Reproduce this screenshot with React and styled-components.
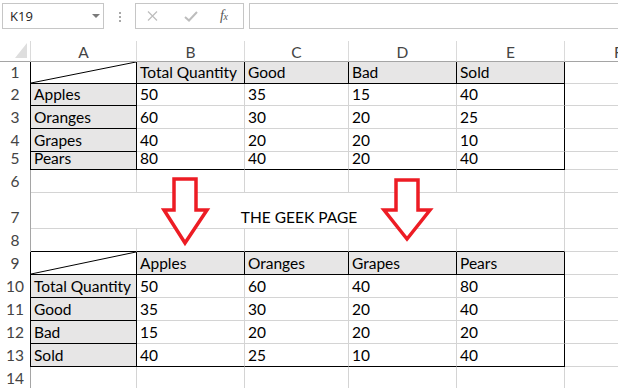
import React from 'react';
import styled, { createGlobalStyle } from 'styled-components';

const GlobalStyle = createGlobalStyle`
  html, body { margin: 0; padding: 0; background: #fff; overflow: hidden; }
  body { font-family: Lato, "Open Sans", sans-serif; }
`;

const Page = styled.div`
  position: relative;
  width: 618px;
  height: 388px;
  overflow: hidden;
  background: #fff;
`;

const Toolbar = styled.div`
  display: flex;
  align-items: flex-start;
  height: 41px;
  box-sizing: border-box;
  padding: 3px 0 0 2px;
`;

const NameBox = styled.div`
  box-sizing: border-box;
  width: 102px;
  height: 26px;
  border: 1px solid #c6c6c6;
  display: flex;
  align-items: center;
  justify-content: space-between;
  padding: 0 3px 0 7px;
  font-family: "Open Sans", sans-serif;
  font-size: 13px;
  color: #222;
`;

const DropArrow = styled.span`
  width: 0;
  height: 0;
  border-left: 4px solid transparent;
  border-right: 4px solid transparent;
  border-top: 4px solid #7a7a7a;
`;

const Dots = styled.div`
  width: 31px;
  display: flex;
  flex-direction: column;
  align-items: center;
  gap: 2px;
  padding-top: 9px;
`;

const Dot = styled.span`
  width: 2px;
  height: 2px;
  background: #a8a8a8;
`;

const FxBox = styled.div`
  box-sizing: border-box;
  width: 109px;
  height: 26px;
  border: 1px solid #c6c6c6;
  display: flex;
  align-items: center;
  padding-left: 11px;
`;

const FxIcon = styled.svg`
  display: block;
  flex: none;
  margin-right: ${p => p.$gap}px;
`;

const FxLabel = styled.span`
  font-family: "Liberation Serif", serif;
  font-style: italic;
  font-size: 14px;
  color: #555;
  letter-spacing: -0.5px;
  & small { font-size: 10px; }
`;

const FormulaInput = styled.div`
  box-sizing: border-box;
  flex: 1;
  height: 26px;
  margin-left: 5px;
  border: 1px solid #c6c6c6;
  border-right: none;
`;

const Sheet = styled.div`
  display: grid;
  grid-template-columns: 31px 106px 108px 104px 108px 108px 108px;
  grid-template-rows: 21px 22px 22px 23px 23px 18px 23px 36px 23px 23px 23px 23px 23px 23px 23px;
  width: max-content;
  font-family: Lato, "Open Sans", sans-serif;
  font-size: 15.5px;
`;

const Corner = styled.div`
  position: relative;
  box-sizing: border-box;
  border-right: 1px solid #dadada;
  border-bottom: 1px solid #a5a5a5;
  &::after {
    content: '';
    position: absolute;
    right: 3px;
    bottom: 3px;
    width: 0;
    height: 0;
    border-left: 12px solid transparent;
    border-bottom: 15px solid #dedede;
  }
`;

const ColHead = styled.div`
  box-sizing: border-box;
  display: flex;
  align-items: center;
  justify-content: center;
  border-right: 1px solid #dadada;
  border-bottom: 1px solid #a5a5a5;
  color: #444;
  line-height: 18px;
  padding-top: 1px;
`;

const RowHead = styled.div`
  box-sizing: border-box;
  display: flex;
  align-items: flex-end;
  justify-content: center;
  border-right: 1px solid ${p => (p.$edge ? '#000' : '#a5a5a5')};
  color: #444;
  line-height: 18px;
  padding-bottom: 3px;
  white-space: nowrap;
`;

const Cell = styled.div`
  box-sizing: border-box;
  position: relative;
  display: flex;
  align-items: flex-end;
  justify-content: ${p => (p.$center ? 'center' : 'flex-start')};
  grid-column: span ${p => p.$span || 1};
  padding: 0 0 2px 3px;
  border-right: 1px solid ${p => (p.$r ? '#000' : '#d4d4d4')};
  border-bottom: 1px solid ${p => (p.$b ? '#000' : '#d4d4d4')};
  background: ${p => (p.$fill ? '#e7e6e6' : '#fff')};
  color: #000;
  line-height: 18px;
  white-space: nowrap;
`;

const Diagonal = styled.svg`
  position: absolute;
  inset: 0;
  width: 100%;
  height: 100%;
`;

const ArrowMark = styled.svg`
  position: absolute;
  left: ${p => p.$x}px;
  top: ${p => p.$y}px;
  overflow: visible;
`;

const table1 = {
  head: ['Total Quantity', 'Good', 'Bad', 'Sold'],
  rows: [
    ['Apples', '50', '35', '15', '40'],
    ['Oranges', '60', '30', '20', '25'],
    ['Grapes', '40', '20', '20', '10'],
    ['Pears', '80', '40', '20', '40'],
  ],
};

const table2 = {
  head: ['Apples', 'Oranges', 'Grapes', 'Pears'],
  rows: [
    ['Total Quantity', '50', '60', '40', '80'],
    ['Good', '35', '30', '20', '40'],
    ['Bad', '15', '20', '20', '20'],
    ['Sold', '40', '25', '10', '40'],
  ],
};

function tableRows(data, start) {
  const out = [];
  out.push(<RowHead key={`rh${start}`} $edge>{start}</RowHead>);
  out.push(
    <Cell key={`d${start}`} $r $b>
      <Diagonal viewBox="0 0 105 21" preserveAspectRatio="none">
        <line x1="0" y1="21" x2="105" y2="0" stroke="#000" strokeWidth="1" vectorEffect="non-scaling-stroke" />
      </Diagonal>
    </Cell>
  );
  data.head.forEach((h, i) => out.push(<Cell key={`h${start}-${i}`} $fill $r $b>{h}</Cell>));
  out.push(<Cell key={`hf${start}`} />);
  data.rows.forEach((row, ri) => {
    const last = ri === data.rows.length - 1;
    const n = start + ri + 1;
    out.push(<RowHead key={`rh${n}`} $edge>{n}</RowHead>);
    row.forEach((v, ci) => (
      out.push(
        <Cell key={`c${n}-${ci}`} $fill={ci === 0} $r={ci === 0 || ci === 4} $b={ci === 0 || last}>
          {v}
        </Cell>
      )
    ));
    out.push(<Cell key={`f${n}`} />);
  });
  return out;
}

function plainRow(n, opts = {}) {
  const out = [<RowHead key={`rh${n}`}>{n}</RowHead>];
  for (let i = 0; i < 6; i++) {
    out.push(<Cell key={`p${n}-${i}`} $b={opts.black && i < 5} />);
  }
  return out;
}

export default function App() {
  const cols = ['A', 'B', 'C', 'D', 'E', 'F'];
  return (
    <Page>
      <GlobalStyle />
      <Toolbar>
        <NameBox>
          <span>K19</span>
          <DropArrow />
        </NameBox>
        <Dots>
          <Dot />
          <Dot />
          <Dot />
        </Dots>
        <FxBox>
          <FxIcon $gap={26} width="11" height="10" viewBox="0 0 11 10">
            <path d="M1 0.5 L10 9.5 M10 0.5 L1 9.5" stroke="#bdbdbd" strokeWidth="1.2" fill="none" />
          </FxIcon>
          <FxIcon $gap={22} width="14" height="11" viewBox="0 0 14 11">
            <path d="M1 6 L5 9.5 L13 1" stroke="#bdbdbd" strokeWidth="2" fill="none" />
          </FxIcon>
          <FxLabel>f<small>x</small></FxLabel>
        </FxBox>
        <FormulaInput />
      </Toolbar>
      <Sheet>
        <Corner />
        {cols.map(c => <ColHead key={c}>{c}</ColHead>)}
        {tableRows(table1, 1)}
        {plainRow(6)}
        <RowHead>7</RowHead>
        <Cell $span={5} $center>THE GEEK PAGE</Cell>
        <Cell />
        {plainRow(8, { black: true })}
        {tableRows(table2, 9)}
        {plainRow(14)}
      </Sheet>
      <ArrowMark $x={160} $y={175} width="50" height="75" viewBox="0 0 50 75">
        <polygon points="14,4 36,4 36,35 47,35 25,68 4,35 14,35" fill="#fff" stroke="#ed1c24" strokeWidth="3.5" />
      </ArrowMark>
      <ArrowMark $x={380} $y={175} width="54" height="72" viewBox="0 0 54 72">
        <polygon points="16,5 38,5 38,35 50,35 27,64 4,35 16,35" fill="#fff" stroke="#ed1c24" strokeWidth="3.5" />
      </ArrowMark>
    </Page>
  );
}
